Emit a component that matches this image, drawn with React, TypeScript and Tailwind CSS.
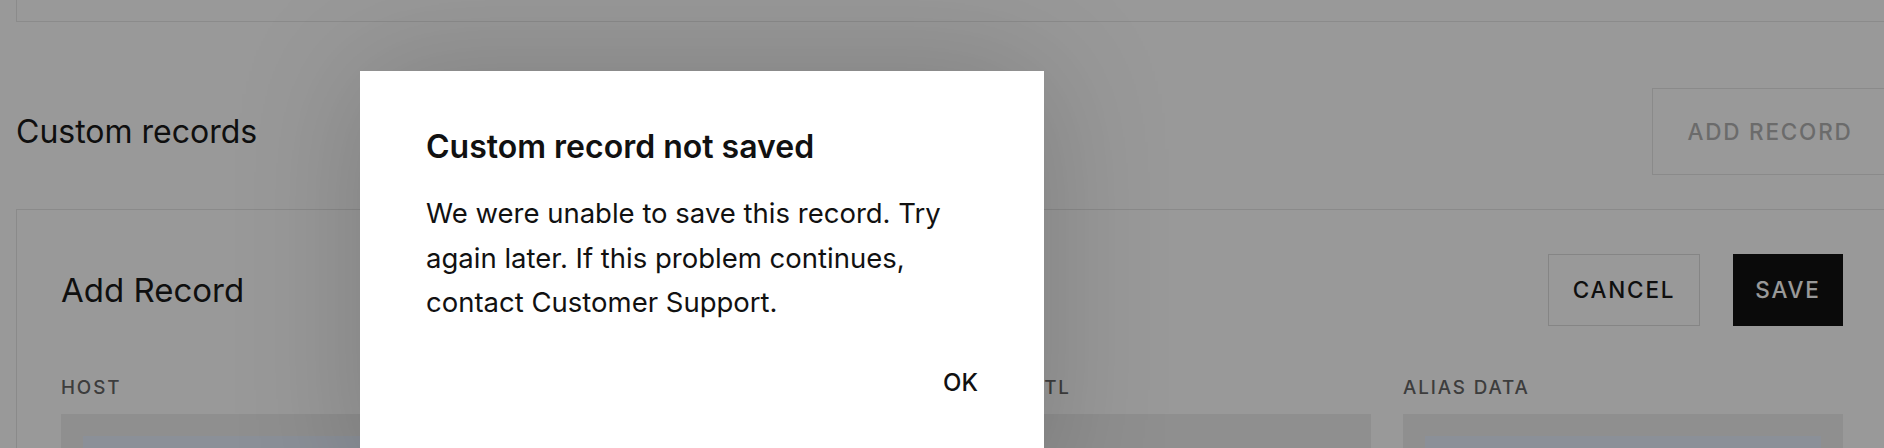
export default function App() {
  const fields = [
    { label: 'Host', value: 'www', autofill: true },
    { label: 'Type', value: 'ALIAS', autofill: false },
    { label: 'TTL', value: '4 hrs', autofill: false },
    { label: 'Alias data', value: 'ext-cust.squarespace.com', autofill: true },
  ];

  return (
    <div className="relative h-[448px] w-[1884px] overflow-hidden bg-white font-['Inter',sans-serif] text-[#1a1a1a]">
      {/* page behind the dialog */}
      <div className="w-[1904px] px-4">
        <div className="h-[22px] border-x border-b border-[#e8e8e8]" />

        <div className="mt-[66px] flex items-center justify-between">
          <h2 className="text-[32px] leading-[40px] font-normal">Custom records</h2>
          <button className="h-[87px] w-[236px] border border-[#e6e6e6] text-[22.5px] font-medium uppercase tracking-[0.08em] text-[#b3b3b3]">
            Add record
          </button>
        </div>

        <div className="mt-[34px] border border-[#e6e6e6] p-[44px]">
          <div className="flex h-[72px] items-center justify-between">
            <h3 className="text-[33px] leading-[40px] font-normal">Add Record</h3>
            <div className="flex gap-[33px]">
              <button className="flex h-[72px] w-[152px] items-center justify-center border border-[#dedede] text-[22.5px] font-medium uppercase tracking-[0.08em] text-[#1a1a1a]">
                Cancel
              </button>
              <button className="flex h-[72px] w-[110px] items-center justify-center bg-[#111] text-[22.5px] font-medium uppercase tracking-[0.08em] text-white">
                Save
              </button>
            </div>
          </div>

          <div className="mt-[50px] grid grid-cols-[452px_453px_341px_440px] gap-x-8">
            {fields.map((f) => (
              <div key={f.label}>
                <div className="mb-[14px] text-[18.8px] leading-[24px] font-medium uppercase tracking-[0.1em] text-[#666]">
                  {f.label}
                </div>
                <div className="h-[96px] bg-[#efefef] p-[22px]">
                  <div
                    className={
                      f.autofill
                        ? 'h-[52px] bg-[#e8f0fe] px-[11px] pt-[9px] text-[18px] leading-[24px] text-[#1a1a1a]'
                        : 'h-[52px] px-[8px] pt-[9px] text-[18px] leading-[24px] text-[#1a1a1a]'
                    }
                  >
                    {f.value}
                  </div>
                </div>
              </div>
            ))}
          </div>
        </div>
      </div>

      {/* dim overlay */}
      <div className="absolute inset-0 bg-black/40" />

      {/* error dialog */}
      <div className="absolute left-[360px] top-[71px] h-[420px] w-[684px] bg-white px-[66px] pt-[57px] shadow-[0_0_120px_rgba(0,0,0,0.18)]">
        <h1 className="text-[32px] leading-[38px] font-semibold text-[#111]">Custom record not saved</h1>
        <p className="mt-[25px] text-[27.5px] leading-[44.5px] text-[#111]">
          We were unable to save this record. Try again later. If this problem continues, contact Customer Support.
        </p>
        <div className="mt-[46px] flex justify-end">
          <button className="text-[24px] leading-[24px] font-medium text-[#111]">OK</button>
        </div>
      </div>
    </div>
  );
}
